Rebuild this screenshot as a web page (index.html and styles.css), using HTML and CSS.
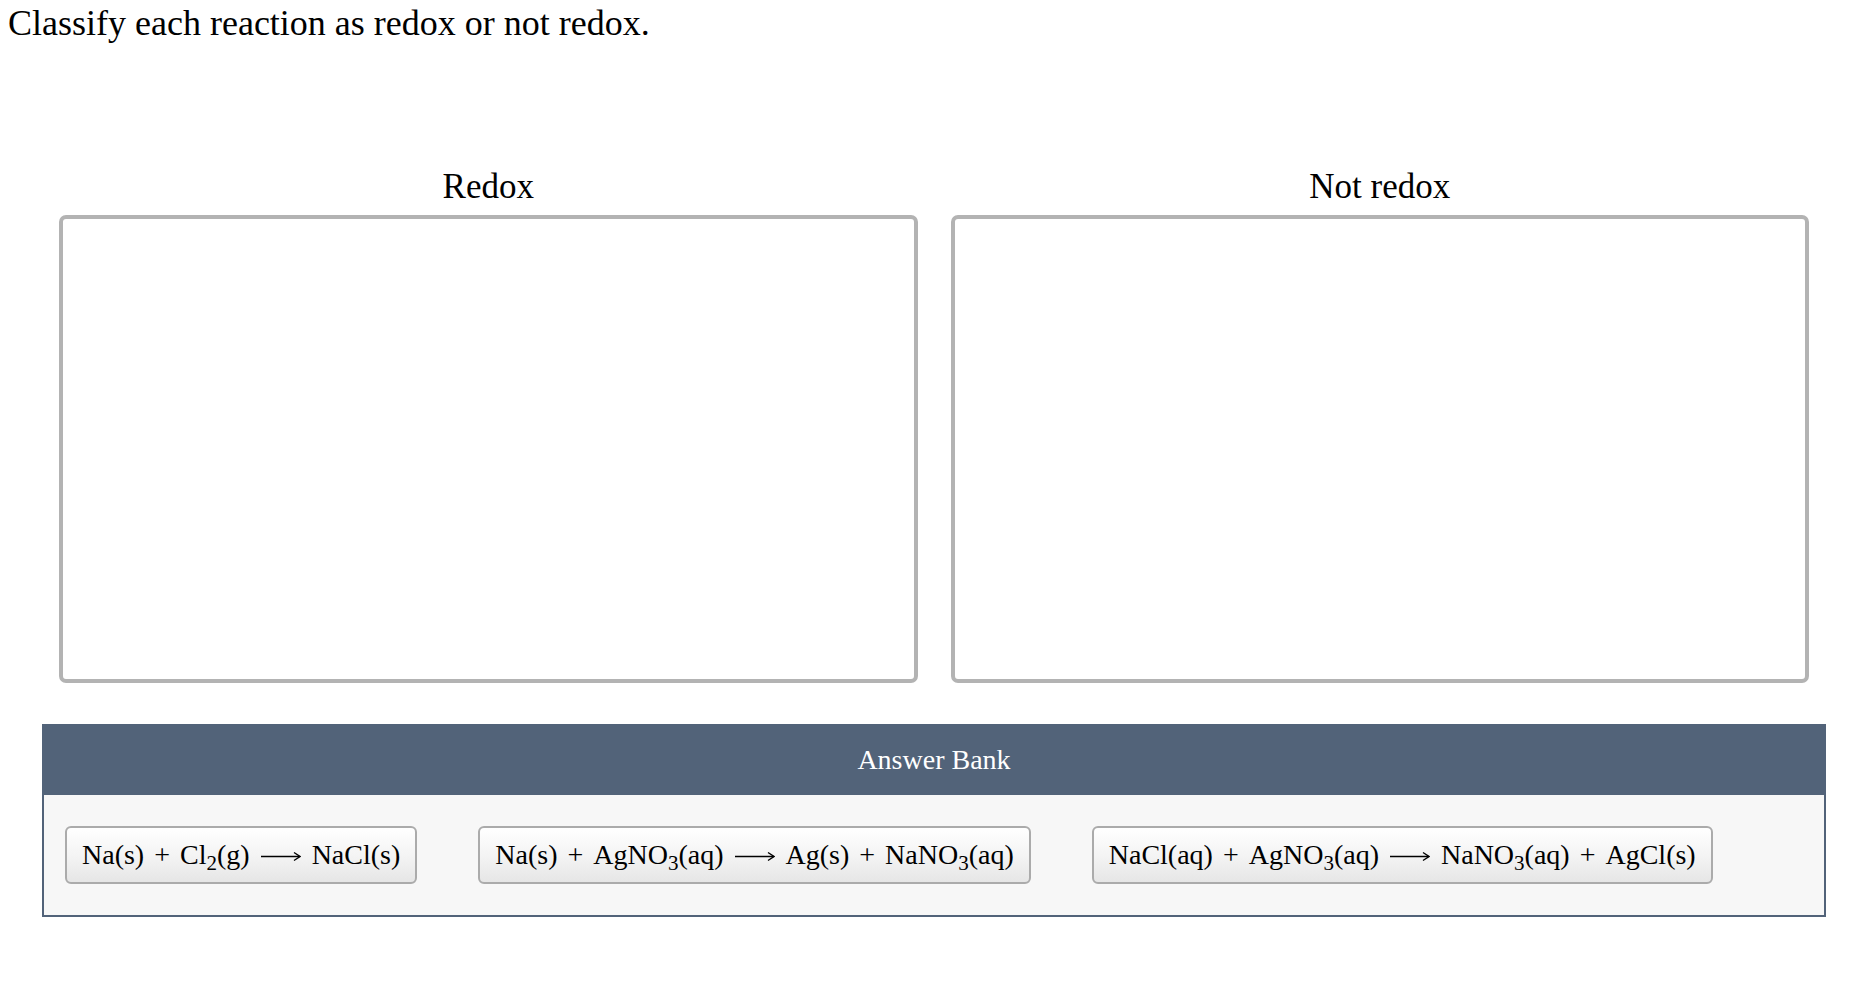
FILE: index.html
```html
<!DOCTYPE html>
<html lang="en">
<head>
<meta charset="utf-8">
<title>Classify reactions</title>
<link rel="stylesheet" href="styles.css">
</head>
<body>
<div class="page">
  <p class="prompt">Classify each reaction as redox or not redox.</p>

  <div class="bins">
    <div class="bin">
      <div class="bin-label">Redox</div>
      <div class="bin-drop"></div>
    </div>
    <div class="bin">
      <div class="bin-label">Not redox</div>
      <div class="bin-drop"></div>
    </div>
  </div>

  <div class="bank">
    <div class="bank-head">Answer Bank</div>
    <div class="bank-items">
      <div class="chip">
        <span class="eq">Na(s)<span class="op">+</span>Cl<span class="sub">2</span>(g)<svg class="arrow" viewBox="0 0 40 12" aria-hidden="true"><path d="M0 6.5H38.5" /><path d="M33 2.5L39 6.5L33 10.5" /></svg>NaCl(s)</span>
      </div>
      <div class="chip">
        <span class="eq">Na(s)<span class="op">+</span>AgNO<span class="sub">3</span>(aq)<svg class="arrow" viewBox="0 0 40 12" aria-hidden="true"><path d="M0 6.5H38.5" /><path d="M33 2.5L39 6.5L33 10.5" /></svg>Ag(s)<span class="op">+</span>NaNO<span class="sub">3</span>(aq)</span>
      </div>
      <div class="chip">
        <span class="eq">NaCl(aq)<span class="op">+</span>AgNO<span class="sub">3</span>(aq)<svg class="arrow" viewBox="0 0 40 12" aria-hidden="true"><path d="M0 6.5H38.5" /><path d="M33 2.5L39 6.5L33 10.5" /></svg>NaNO<span class="sub">3</span>(aq)<span class="op">+</span>AgCl(s)</span>
      </div>
    </div>
  </div>
</div>
</body>
</html>
```

FILE: styles.css
```css
html, body {
  margin: 0;
  padding: 0;
  background: #ffffff;
}

body {
  font-family: "Liberation Serif", "Times New Roman", serif;
  color: #000000;
}

.page {
  padding: 0 8px;
}

.prompt {
  margin: 3px 0 0;
  font-size: 36px;
  line-height: 40px;
}

/* two drop targets side by side */
.bins {
  display: grid;
  grid-template-columns: 1fr 1fr;
  column-gap: 33px;
  margin: 124px 33px 0 51px;
}

.bin-label {
  text-align: center;
  font-size: 35px;
  line-height: 40px;
  margin-bottom: 8px;
}

.bin-drop {
  height: 460px;
  border: 4px solid #b3b3b3;
  border-radius: 7px;
  background: #ffffff;
}

/* answer bank panel */
.bank {
  margin: 41px 16px 0 34px;
  border: 2px solid #526379;
  border-top: 0;
  background: #f7f7f7;
}

.bank-head {
  height: 71px;
  background: #526379;
  color: #ffffff;
  font-size: 28px;
  line-height: 71px;
  text-align: center;
}

.bank-items {
  display: flex;
  align-items: center;
  gap: 61px;
  padding: 31px 21px 31px;
}

.chip {
  display: flex;
  align-items: center;
  height: 54px;
  padding: 0 15px;
  border: 2px solid #ababab;
  border-radius: 6px;
  background: linear-gradient(to bottom, #ffffff 0%, #f4f4f4 50%, #e6e6e6 100%);
  font-size: 28px;
  white-space: nowrap;
}

.eq {
  display: inline-flex;
  align-items: baseline;
  line-height: 1;
}

.op {
  margin: 0 10px;
}

.sub {
  font-size: 0.75em;
  position: relative;
  top: 0.28em;
  line-height: 0;
}

.arrow {
  width: 40px;
  height: 12px;
  margin: 0 11px;
  align-self: center;
  position: relative;
  top: 1px;
  fill: none;
  stroke: #000000;
  stroke-width: 1.4;
}
```
